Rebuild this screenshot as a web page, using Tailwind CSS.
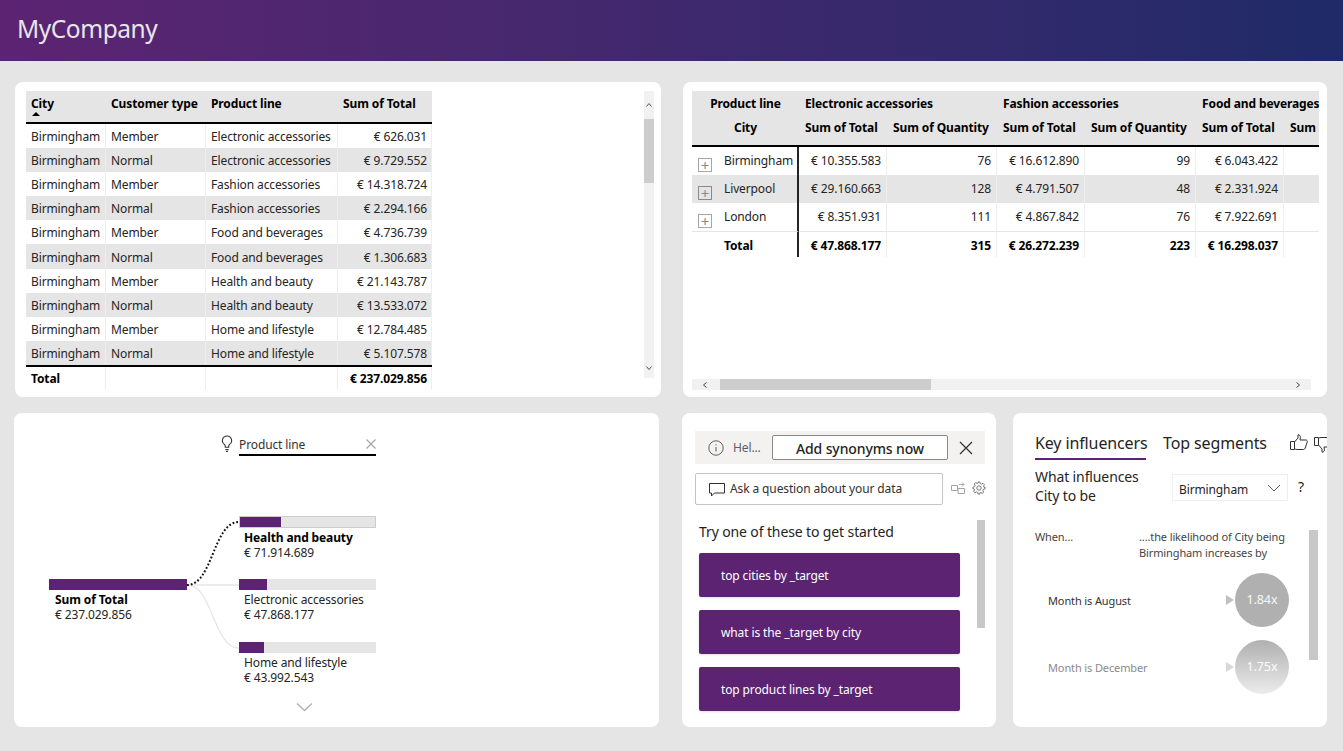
<!DOCTYPE html>
<html lang="en">
<head>
  <meta charset="UTF-8" />
  <title>MyCompany</title>
  <script src="https://cdn.jsdelivr.net/npm/@tailwindcss/browser@4"></script>
</head>
<body class="bg-[#e5e5e5] w-[1343px] h-[751px] overflow-hidden font-['Noto_Sans',sans-serif] text-[12px] tracking-[-0.12px] text-[#252423]">
  <!-- header -->
  <header class="h-[61px] bg-gradient-to-r from-[#5c2373] to-[#1f2a68] flex items-center pl-[17px] pb-[3px]">
    <h1 class="text-[24.5px] text-[#e6e6e6] tracking-[-0.45px]">MyCompany</h1>
  </header>

  <!-- top row -->
  <div class="flex mt-[21px] ml-[15px] gap-[22px]">
    <!-- flat table -->
    <section class="w-[646px] h-[315px] bg-white rounded-[8px] flex pl-[11px] pt-[9px]">
      <div class="w-[406px]">
        <table class="table-fixed w-[406px] border-separate border-spacing-0 [&_td]:pl-[5px] [&_td]:pr-[4px] [&_td]:pt-[2px] [&_td]:pb-0 [&_td]:border-r [&_td]:border-[#eeeeee] [&_td]:whitespace-nowrap [&_td]:overflow-hidden [&_tbody_tr]:h-[24.1px] [&_tr:nth-child(even)]:bg-[#e5e5e5]">
          <colgroup><col class="w-[80px]" /><col class="w-[100px]" /><col class="w-[132px]" /><col class="w-[94px]" /></colgroup>
          <thead>
            <tr class="h-[33px] bg-[#e5e5e5] font-bold text-black text-left align-top [&_th]:pl-[5px] [&_th]:pt-[4px] [&_th]:font-bold [&_th]:whitespace-nowrap [&_th]:border-b-[2px] [&_th]:border-black">
              <th class="relative">City<span class="absolute left-[6px] top-[21px] w-0 h-0 border-l-[4px] border-r-[4px] border-b-[4px] border-l-transparent border-r-transparent border-b-black"></span></th>
              <th>Customer type</th>
              <th>Product line</th>
              <th>Sum of Total</th>
            </tr>
          </thead>
          <tbody>
            <tr><td>Birmingham</td><td>Member</td><td>Electronic accessories</td><td class="text-right">€ 626.031</td></tr>
            <tr><td>Birmingham</td><td>Normal</td><td>Electronic accessories</td><td class="text-right">€ 9.729.552</td></tr>
            <tr><td>Birmingham</td><td>Member</td><td>Fashion accessories</td><td class="text-right">€ 14.318.724</td></tr>
            <tr><td>Birmingham</td><td>Normal</td><td>Fashion accessories</td><td class="text-right">€ 2.294.166</td></tr>
            <tr><td>Birmingham</td><td>Member</td><td>Food and beverages</td><td class="text-right">€ 4.736.739</td></tr>
            <tr><td>Birmingham</td><td>Normal</td><td>Food and beverages</td><td class="text-right">€ 1.306.683</td></tr>
            <tr><td>Birmingham</td><td>Member</td><td>Health and beauty</td><td class="text-right">€ 21.143.787</td></tr>
            <tr><td>Birmingham</td><td>Normal</td><td>Health and beauty</td><td class="text-right">€ 13.533.072</td></tr>
            <tr><td>Birmingham</td><td>Member</td><td>Home and lifestyle</td><td class="text-right">€ 12.784.485</td></tr>
            <tr><td>Birmingham</td><td>Normal</td><td>Home and lifestyle</td><td class="text-right">€ 5.107.578</td></tr>
          </tbody>
        </table>
        <div class="grid grid-cols-[80px_100px_132px_94px] h-[25px] border-t-[2px] border-black font-bold text-black items-center [&>div]:h-full [&>div]:pl-[5px] [&>div]:pr-[4px] [&>div]:pt-[1px] [&>div]:border-r [&>div]:border-[#eeeeee] [&>div]:flex [&>div]:items-center">
          <div>Total</div><div></div><div></div><div class="justify-end">€ 237.029.856</div>
        </div>
      </div>
      <!-- vertical scrollbar -->
      <div class="ml-[212px] w-[10px] h-[287px] bg-[#f1f1f1] flex flex-col items-center">
        <svg class="mt-[10px] mb-[10px]" width="8" height="8" viewBox="0 0 8 8" fill="none" stroke="#555" stroke-width="1"><path d="M1.5 5.5 4 2.5 6.5 5.5" /></svg>
        <div class="w-full h-[64px] bg-[#cdcdcd]"></div>
        <svg class="mt-auto mb-[6px]" width="8" height="8" viewBox="0 0 8 8" fill="none" stroke="#555" stroke-width="1"><path d="M1.5 2.5 4 5.5 6.5 2.5" /></svg>
      </div>
    </section>

    <!-- matrix -->
    <section class="w-[644px] h-[315px] bg-white rounded-[8px] pl-[9px] pt-[9px]">
      <div class="w-[627px] h-[288px] overflow-hidden">
        <table class="table-fixed w-[760px] border-separate border-spacing-0 [&_td]:border-r [&_td]:border-[#eeeeee] [&_td]:whitespace-nowrap [&_td]:px-[5px] [&_td]:text-right">
          <colgroup><col class="w-[107px]" /><col class="w-[88px]" /><col class="w-[110px]" /><col class="w-[88px]" /><col class="w-[111px]" /><col class="w-[88px]" /><col class="w-[168px]" /></colgroup>
          <thead class="bg-[#e5e5e5] text-black [&_th]:font-bold [&_th]:whitespace-nowrap [&_th]:pl-[6px] [&_th]:pr-[2px] [&_th]:text-left">
            <tr class="h-[24px]">
              <th class="!text-center !pl-[2px] pt-[2px]">Product line</th>
              <th colspan="2" class="pt-[2px]">Electronic accessories</th>
              <th colspan="2" class="pt-[2px]">Fashion accessories</th>
              <th colspan="2" class="pt-[2px]">Food and beverages</th>
            </tr>
            <tr class="h-[32px] align-top [&_th]:pt-[4px] [&_th]:border-b-[2px] [&_th]:border-black">
              <th class="!text-center !pl-[0px] !pr-[0px]">City</th>
              <th>Sum of Total</th><th>Sum of Quantity</th>
              <th>Sum of Total</th><th>Sum of Quantity</th>
              <th>Sum of Total</th><th>Sum of Quantity</th>
            </tr>
          </thead>
          <tbody>
            <tr class="h-[28px]">
              <td class="!text-left !pl-[32px] !border-r-[2px] !border-r-[#252423] relative"><span class="absolute left-[6px] top-[11px] w-[14px] h-[14px] border border-[#a6a6a6] text-[#8a8a8a] flex items-center justify-center text-[15px] leading-none">+</span>Birmingham</td>
              <td>€ 10.355.583</td><td>76</td><td>€ 16.612.890</td><td>99</td><td>€ 6.043.422</td><td></td>
            </tr>
            <tr class="h-[28px] bg-[#e5e5e5]">
              <td class="!text-left !pl-[32px] !border-r-[2px] !border-r-[#252423] relative"><span class="absolute left-[6px] top-[11px] w-[14px] h-[14px] border border-[#8a8a8a] text-[#8a8a8a] flex items-center justify-center text-[15px] leading-none">+</span>Liverpool</td>
              <td>€ 29.160.663</td><td>128</td><td>€ 4.791.507</td><td>48</td><td>€ 2.331.924</td><td></td>
            </tr>
            <tr class="h-[29px] [&_td]:border-b [&_td]:border-b-[#e5e5e5]">
              <td class="!text-left !pl-[32px] !border-r-[2px] !border-r-[#252423] relative"><span class="absolute left-[6px] top-[11px] w-[14px] h-[14px] border border-[#a6a6a6] text-[#8a8a8a] flex items-center justify-center text-[15px] leading-none">+</span>London</td>
              <td>€ 8.351.931</td><td>111</td><td>€ 4.867.842</td><td>76</td><td>€ 7.922.691</td><td></td>
            </tr>
            <tr class="h-[25px] font-bold text-black [&_td]:pt-[2px]">
              <td class="!text-left !pl-[32px] !border-r-[2px] !border-r-[#252423]">Total</td>
              <td>€ 47.868.177</td><td>315</td><td>€ 26.272.239</td><td>223</td><td>€ 16.298.037</td><td></td>
            </tr>
          </tbody>
        </table>
      </div>
      <!-- horizontal scrollbar -->
      <div class="w-[619px] h-[11px] bg-[#f1f1f1] flex items-center">
        <svg class="ml-[9px]" width="8" height="8" viewBox="0 0 8 8" fill="none" stroke="#444" stroke-width="1"><path d="M5.5 1.5 2.5 4 5.5 6.5" /></svg>
        <div class="ml-[11px] w-[211px] h-full bg-[#cdcdcd]"></div>
        <svg class="ml-auto mr-[9px]" width="8" height="8" viewBox="0 0 8 8" fill="none" stroke="#444" stroke-width="1"><path d="M2.5 1.5 5.5 4 2.5 6.5" /></svg>
      </div>
    </section>
  </div>

  <!-- bottom row -->
  <div class="flex mt-[16px] ml-[14px]">
    <!-- decomposition tree: nodes placed on a free canvas -->
    <section class="relative w-[645px] h-[314px] bg-white rounded-[8px]">
      <svg class="absolute left-[206px] top-[22px]" width="14" height="18" viewBox="0 0 14 18" fill="none" stroke="#333" stroke-width="1.1"><path d="M7 1a4.6 4.6 0 0 0-2.6 8.4c.6.5.9 1.2.9 2v.9h3.4v-.9c0-.8.3-1.5.9-2A4.6 4.6 0 0 0 7 1Z" /><path d="M5.4 14.6h3.2M6 16.5h2" /></svg>
      <div class="absolute left-[225px] top-[23px] w-[137px] h-[20px] border-b-[2px] border-black leading-[17px] text-[#333]">Product line</div>
      <svg class="absolute left-[352px] top-[26px]" width="10" height="10" viewBox="0 0 10 10" stroke="#a6a6a6" stroke-width="1.2"><path d="M.5.5l9 9M9.5.5l-9 9" /></svg>

      <svg class="absolute left-[172px] top-[100px]" width="54" height="140" viewBox="0 0 54 140" fill="none">
        <path d="M1 72H53" stroke="#e6e6e6" stroke-width="1.3" />
        <path d="M1 72C27 72 27 135 53 135" stroke="#e6e6e6" stroke-width="1.3" />
        <path d="M1 72C27 72 27 9 53 9" stroke="#111" stroke-width="2" stroke-dasharray="1.8 2" />
      </svg>

      <div class="absolute left-[35px] top-[166px] w-[138px] h-[11px] bg-[#5c2373]"></div>
      <div class="absolute left-[41px] top-[179px] leading-[15px]"><p class="font-bold text-black">Sum of Total</p><p>€ 237.029.856</p></div>

      <div class="absolute left-[225px] top-[103px] w-[137px] h-[12px] bg-[#e5e5e5] border border-[#d0cccc]"><div class="w-[41px] h-full bg-[#5c2373]"></div></div>
      <div class="absolute left-[230px] top-[117px] leading-[15px]"><p class="font-bold text-black">Health and beauty</p><p>€ 71.914.689</p></div>

      <div class="absolute left-[225px] top-[166px] w-[137px] h-[11px] bg-[#e5e5e5]"><div class="w-[28px] h-full bg-[#5c2373]"></div></div>
      <div class="absolute left-[230px] top-[179px] leading-[15px]"><p>Electronic accessories</p><p>€ 47.868.177</p></div>

      <div class="absolute left-[225px] top-[229px] w-[137px] h-[11px] bg-[#e5e5e5]"><div class="w-[25px] h-full bg-[#5c2373]"></div></div>
      <div class="absolute left-[230px] top-[242px] leading-[15px]"><p>Home and lifestyle</p><p>€ 43.992.543</p></div>

      <svg class="absolute left-[282px] top-[289px]" width="17" height="10" viewBox="0 0 17 10" fill="none" stroke="#b3b3b3" stroke-width="1.5"><path d="M1 1.5 8.5 8.5 16 1.5" /></svg>
    </section>

    <!-- Q&A -->
    <section class="ml-[23px] w-[314px] h-[314px] bg-white rounded-[8px] pl-[13px] pt-[18px] flex flex-col">
      <div class="w-[290px] h-[33px] bg-[#f3f2f1] flex items-center pl-[13px]">
        <svg width="16" height="16" viewBox="0 0 16 16" fill="none" stroke="#605e5c" stroke-width="1"><circle cx="8" cy="8" r="7.2" /><path d="M8 7v4.5M8 4.2v1.2" /></svg>
        <span class="ml-[9px] w-[39px] text-[#605e5c]">Hel...</span>
        <button class="w-[176px] h-[25px] bg-white border border-[#8a8886] rounded-[2px] text-[14px] text-[#252423] font-medium pt-[1px]">Add synonyms now</button>
        <svg class="ml-[11px]" width="14" height="14" viewBox="0 0 14 14" stroke="#323130" stroke-width="1.2"><path d="M1 1l12 12M13 1 1 13" /></svg>
      </div>
      <div class="flex items-center mt-[9px]">
        <div class="shrink-0 w-[248px] h-[32px] border border-[#c4c4c4] rounded-[2px] flex items-center pl-[13px]">
          <svg width="16" height="15" viewBox="0 0 16 15" fill="none" stroke="#323130" stroke-width="1"><path d="M.5 1.5h15v9.5H5.5L2.5 14v-3H.5Z" /></svg>
          <span class="ml-[5px] text-[#323130]">Ask a question about your data</span>
        </div>
        <svg class="ml-[8px] -mt-[3px]" width="14" height="14" viewBox="0 0 14 14" fill="none" stroke="#a6a6a6" stroke-width="1"><path d="M.5 4.5h6v5h-6zM7 7.5h6.5v5H7zM8 3.5h5M11 1.5l2 2-2 2" /></svg>
        <svg class="ml-[7px] -mt-[3px]" width="14" height="14" viewBox="0 0 14 14" fill="none" stroke="#777" stroke-width="1"><circle cx="7" cy="7" r="2.2" /><path d="M6 1h2l.3 1.6 1.3.6 1.4-.9 1.4 1.4-.9 1.4.6 1.3L13 6v2l-1.6.3-.6 1.3.9 1.4-1.4 1.4-1.4-.9-1.3.6L8 13H6l-.3-1.6-1.3-.6-1.4.9-1.4-1.4.9-1.4-.6-1.3L1 8V6l1.6-.3.6-1.3-.9-1.4 1.4-1.4 1.4.9 1.3-.6Z" /></svg>
      </div>
      <div class="flex mt-[15px]">
        <div class="w-[265px] pl-[4px]">
          <p class="text-[14px] leading-[20px] text-[#252423] mt-[2px]">Try one of these to get started</p>
          <div class="mt-[11px] flex flex-col gap-[13px] text-white [&>div]:pt-[2px]">
            <div class="h-[44px] bg-[#5c2373] rounded-[2px] flex items-center pl-[22px] shadow-sm">top cities by _target</div>
            <div class="h-[44px] bg-[#5c2373] rounded-[2px] flex items-center pl-[22px] shadow-sm">what is the _target by city</div>
            <div class="h-[44px] bg-[#5c2373] rounded-[2px] flex items-center pl-[22px] shadow-sm">top product lines by _target</div>
          </div>
        </div>
        <div class="ml-[17px] w-[8px] h-[108px] bg-[#c8c8c8]"></div>
      </div>
    </section>

    <!-- key influencers -->
    <section class="relative ml-[17px] w-[314px] h-[314px] bg-white rounded-[8px] overflow-hidden pl-[22px] pt-[18px]">
      <div class="flex text-[16px] leading-[24px] items-start">
        <div class="w-[111px] h-[29px] border-b-[2px] border-[#5c2373] whitespace-nowrap">Key influencers</div>
        <div class="ml-[17px] whitespace-nowrap">Top segments</div>
        <svg class="ml-[23px] mt-[3px] shrink-0" width="18" height="17" viewBox="0 0 18 17" fill="none" stroke="#323130" stroke-width="1"><path d="M.5 7.5h4v8h-4zM4.5 8 8 4V.8c1.5 0 2.4 1 2.4 2.4L10 6h6c1 0 1.6 1 1.2 2l-2 6.2c-.3.8-1 1.3-1.8 1.3H7c-1 0-1.6-.4-2.5-.8" /></svg>
        <svg class="ml-[6px] mt-[5px] shrink-0" width="18" height="17" viewBox="0 0 18 17" fill="none" stroke="#323130" stroke-width="1"><path d="M.5 1.5h4v8h-4zM4.5 9 8 13v3.2c1.5 0 2.4-1 2.4-2.4L10 11h6c1 0 1.6-1 1.2-2l-2-6.2c-.3-.8-1-1.3-1.800-1.3H7c-1 0-1.6.4-2.5.8" /></svg>
      </div>
      <div class="flex mt-[7px]">
        <p class="w-[137px] text-[14px] leading-[19px]">What influences<br />City to be</p>
        <div class="w-[116px] h-[27px] mt-[7px] border border-[#eeeeee] flex items-center pl-[6px] pr-[6px] pt-[5px] justify-between">
          <span>Birmingham</span>
          <svg class="-mt-[5px]" width="14" height="8" viewBox="0 0 14 8" fill="none" stroke="#605e5c" stroke-width="1"><path d="M1 1l6 6 6-6" /></svg>
        </div>
        <span class="ml-[10px] mt-[9px] text-[14px]">?</span>
      </div>
      <div class="flex mt-[24px] text-[11px] leading-[16px] text-[#444]">
        <p class="w-[104px]">When...</p>
        <p>....the likelihood of City being<br />Birmingham increases by</p>
      </div>
      <div class="absolute left-[35px] top-[180px] text-[11px] text-[#333]">Month is August</div>
      <div class="absolute left-[35px] top-[247px] text-[11px] text-[#8a8a8a]">Month is December</div>
      <div class="absolute left-[213px] top-[182px] w-0 h-0 border-y-[5px] border-l-[8px] border-y-transparent border-l-[#c0c0c0]"></div>
      <div class="absolute left-[213px] top-[249px] w-0 h-0 border-y-[5px] border-l-[8px] border-y-transparent border-l-[#d8d8d8]"></div>
      <div class="absolute left-[222px] top-[160px] w-[54px] h-[54px] rounded-full bg-[#b0b0b0] flex items-center justify-center text-white/90 text-[12.5px]">1.84x</div>
      <div class="absolute left-[222px] top-[227px] w-[54px] h-[54px] rounded-full bg-gradient-to-b from-[#b0b0b0] to-[#ececec] flex items-center justify-center text-white/90 text-[12.5px]">1.75x</div>
      <div class="absolute left-[296px] top-[117px] w-[9px] h-[130px] bg-[#c8c8c8]"></div>
    </section>
  </div>
</body>
</html>
